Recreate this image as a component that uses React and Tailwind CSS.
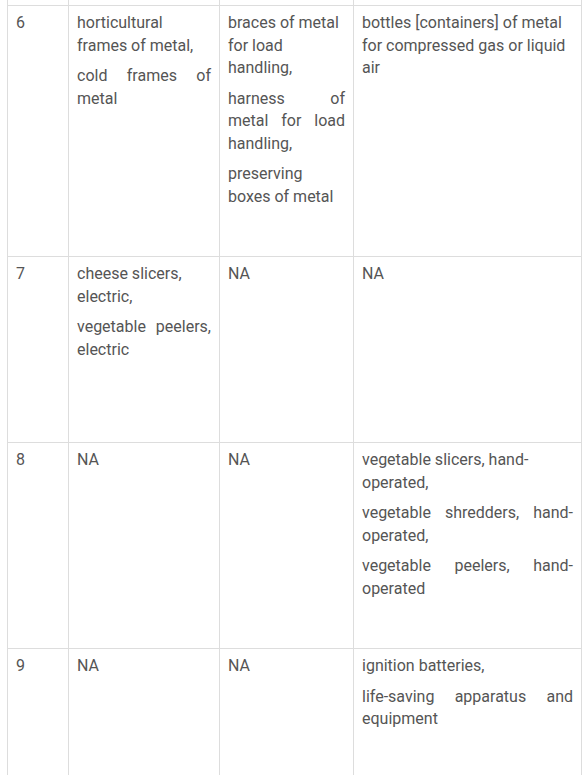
import React from 'react';

const rows = [
  {
    no: '6',
    h: 'h-[251px]',
    cells: [
      ['horticultural frames of metal,', 'cold frames of metal'],
      ['braces of metal for load handling,', 'harness of metal for load handling,', 'preserving boxes of metal'],
      ['bottles [containers] of metal for compressed gas or liquid air'],
    ],
  },
  {
    no: '7',
    h: 'h-[186px]',
    cells: [
      ['cheese slicers, electric,', 'vegetable peelers, electric'],
      ['NA'],
      ['NA'],
    ],
  },
  {
    no: '8',
    h: 'h-[206px]',
    cells: [
      ['NA'],
      ['NA'],
      ['vegetable slicers, hand-operated,', 'vegetable shredders, hand-operated,', 'vegetable peelers, hand-operated'],
    ],
  },
  {
    no: '9',
    h: 'h-[140px]',
    cells: [
      ['NA'],
      ['NA'],
      ['ignition batteries,', 'life-saving apparatus and equipment'],
    ],
  },
];

function Cell({ paras, last, h }) {
  return (
    <div className={`${h} border-l border-t border-[#dddddd] px-2 pt-[6px] ${last ? 'border-r' : ''}`}>
      {paras.map((p, i) => (
        <p key={i} className={`mb-2 ${i > 0 ? 'text-justify' : 'text-left'}`}>
          {p}
        </p>
      ))}
    </div>
  );
}

export default function App() {
  return (
    <div className="w-[587px] h-[775px] overflow-hidden bg-white font-['Roboto',sans-serif] text-[16px] leading-[22.5px] text-[#555555]">
      <div className="ml-[7px] w-[575px] grid grid-cols-[61px_151px_134px_229px]">
        <div className="h-[5px] border-l border-[#dddddd]" />
        <div className="h-[5px] border-l border-[#dddddd]" />
        <div className="h-[5px] border-l border-[#dddddd]" />
        <div className="h-[5px] border-l border-r border-[#dddddd]" />
        {rows.map((r) => (
          <React.Fragment key={r.no}>
            <Cell paras={[r.no]} h={r.h} />
            {r.cells.map((c, i) => (
              <Cell key={i} paras={c} h={r.h} last={i === 2} />
            ))}
          </React.Fragment>
        ))}
      </div>
    </div>
  );
}
